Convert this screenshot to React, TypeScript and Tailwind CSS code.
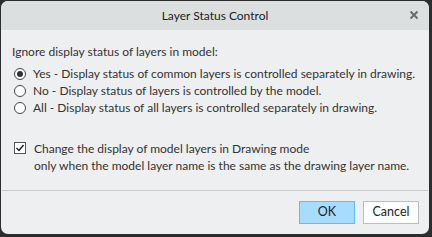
import React from "react";

function Radio({ checked }: { checked?: boolean }) {
  return (
    <span className="w-[12px] h-[12px] rounded-full border border-[#444] bg-white flex items-center justify-center shrink-0">
      {checked && <span className="w-[6px] h-[6px] rounded-full bg-[#333]" />}
    </span>
  );
}

export default function App() {
  const font = { fontFamily: 'Lato, "Noto Sans", sans-serif' };
  return (
    <div className="w-[432px] h-[237px] bg-[#2d2d2d] p-[1px] pr-[3px] pb-[3px]" style={font}>
      <div className="w-full h-full rounded-[7px] overflow-hidden bg-[#eeeff1] flex flex-col text-[#333] text-[12px] whitespace-nowrap">
        <div className="h-[29px] bg-[#dcdfe0] flex items-center justify-center relative">
          <span className="text-[12px] text-[#222]">Layer Status Control</span>
          <span className="absolute right-[9px] top-[8px]">
            <svg width="12" height="12" viewBox="0 0 12 12">
              <path d="M2.5 2.5 L9.5 9.5 M9.5 2.5 L2.5 9.5" stroke="#6b6b6b" strokeWidth="2" />
            </svg>
          </span>
        </div>
        <div className="flex flex-col pl-[11px] pt-[13px]">
          <div className="leading-[17px]">Ignore display status of layers in model:</div>
          <div className="flex flex-col pl-[2px] mt-[5px]">
            <div className="flex items-center gap-[7px] h-[17px]"><Radio checked /><span>Yes - Display status of common layers is controlled separately in drawing.</span></div>
            <div className="flex items-center gap-[7px] h-[17px]"><Radio /><span>No - Display status of layers is controlled by the model.</span></div>
            <div className="flex items-center gap-[7px] h-[17px]"><Radio /><span>All - Display status of all layers is controlled separately in drawing.</span></div>
          </div>
          <div className="flex items-start gap-[8px] mt-[24px] pl-[2px]">
            <span className="w-[12px] h-[12px] border border-[#555] bg-white mt-[2px] flex items-center justify-center shrink-0">
              <svg width="10" height="10" viewBox="0 0 10 10"><path d="M1.5 5 L4 7.5 L8.5 2" stroke="#222" strokeWidth="1.5" fill="none" /></svg>
            </span>
            <div className="leading-[17px]">
              <div>Change the display of model layers in Drawing mode</div>
              <div>only when the model layer name is the same as the drawing layer name.</div>
            </div>
          </div>
        </div>
        <div className="mt-auto border-t border-[#c8c9cc] mx-[1px] h-[44px] flex items-center justify-end gap-[8px] pr-[9px]">
          <button className="w-[56px] h-[23px] bg-[#a6dcfd] border border-[#5fbdf8] text-[12.5px] text-[#222]">OK</button>
          <button className="w-[56px] h-[23px] bg-white border border-[#bdbdbd] text-[12.5px] text-[#222]">Cancel</button>
        </div>
      </div>
    </div>
  );
}
